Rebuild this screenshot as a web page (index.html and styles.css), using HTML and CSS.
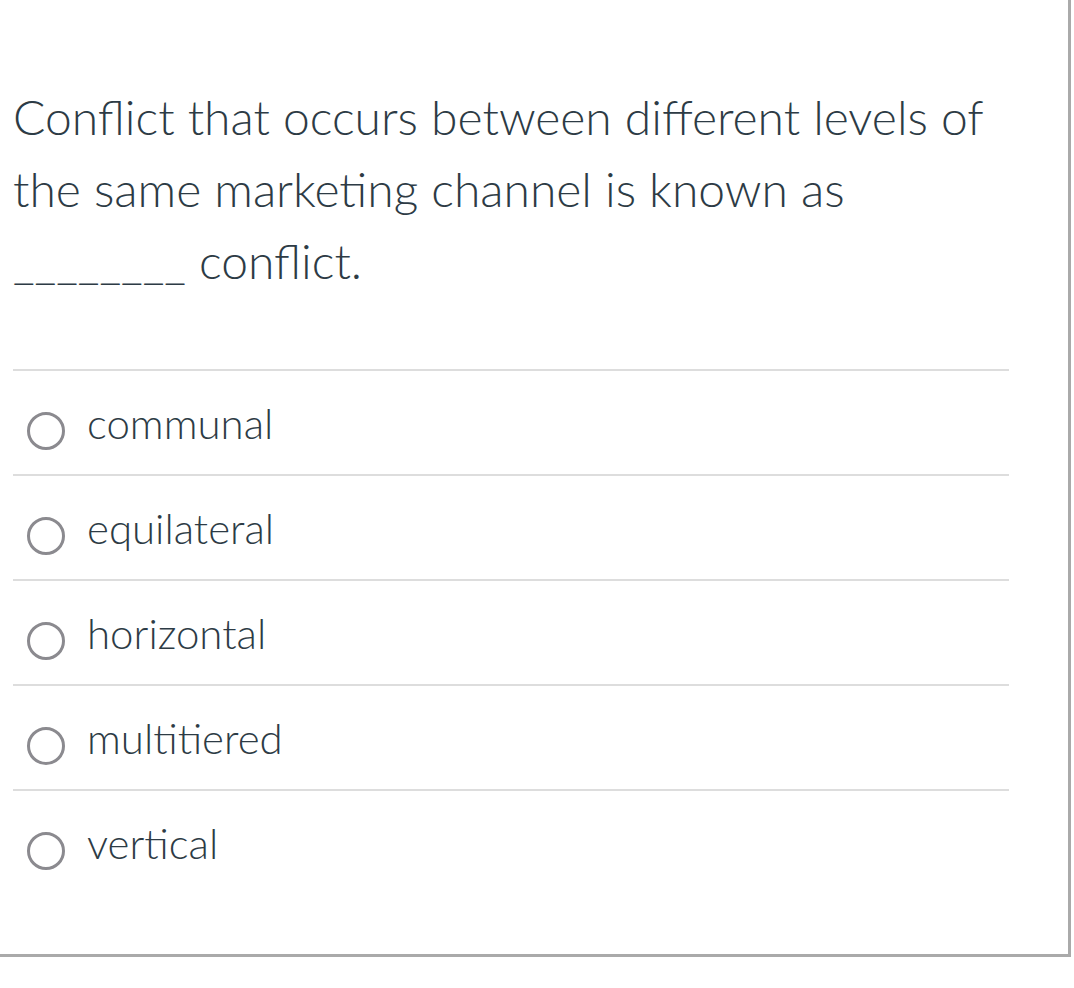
FILE: index.html
```html
<!DOCTYPE html>
<html>
<head>
<meta charset="utf-8">
<link rel="stylesheet" href="styles.css">
</head>
<body>
<div class="card">
  <div class="question">Conflict that occurs between different levels of the same marketing channel is known as ________ conflict.</div>
  <div class="answers">
    <label class="answer"><span class="radio"></span><span class="label">communal</span></label>
    <label class="answer"><span class="radio"></span><span class="label">equilateral</span></label>
    <label class="answer"><span class="radio"></span><span class="label">horizontal</span></label>
    <label class="answer"><span class="radio"></span><span class="label">multitiered</span></label>
    <label class="answer"><span class="radio"></span><span class="label">vertical</span></label>
  </div>
</div>
</body>
</html>
```
FILE: styles.css
```css
html, body {
  margin: 0;
  padding: 0;
  background: #ffffff;
}
body {
  font-family: "Lato", "Open Sans", sans-serif;
  font-weight: 300;
  color: #2d3b45;
}
.card {
  box-sizing: border-box;
  width: 1071px;
  height: 957px;
  border-right: 3px solid #aaaaaa;
  border-bottom: 3px solid #aaaaaa;
  padding: 81px 0 0 13px;
}
.question {
  width: 985px;
  font-size: 48px;
  line-height: 72px;
}
.answers {
  width: 996px;
  margin-top: 72px;
}
.answer {
  box-sizing: border-box;
  display: flex;
  align-items: flex-start;
  height: 105px;
  border-top: 2px solid #dddddd;
  padding: 21px 0 0 14px;
}
.radio {
  box-sizing: border-box;
  width: 38px;
  height: 38px;
  margin-top: 20px;
  border-radius: 50%;
  border: 3.5px solid #8b8a8f;
  flex: none;
}
.label {
  margin-left: 22px;
  font-size: 42px;
  line-height: 63px;
}
```
